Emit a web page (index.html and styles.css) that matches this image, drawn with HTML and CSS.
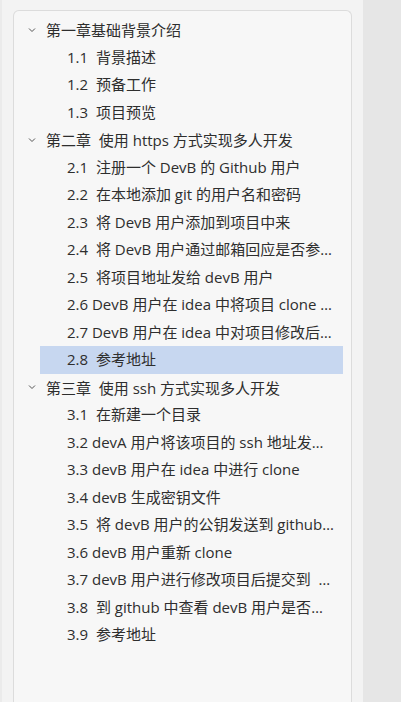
FILE: index.html
```html
<!DOCTYPE html>
<html lang="zh-cn">
<head>
	<meta charset="UTF-8">
	<title>目录</title>
	<link rel="stylesheet" href="styles.css">
</head>
<body>
	<div id="page">
		<div class="edge"></div>
		<div class="side">
			<div class="panel">
				<ul class="toc">
					<li class="chapter">
						<div class="head"><svg class="arrow" width="8" height="6" viewBox="0 0 8 6"><path d="M1 1.5l3 3 3-3"/></svg><span>第一章基础背景介绍</span></div>
						<ul class="items">
							<li>1.1  背景描述</li>
							<li>1.2  预备工作</li>
							<li>1.3  项目预览</li>
						</ul>
					</li>
					<li class="chapter">
						<div class="head"><svg class="arrow" width="8" height="6" viewBox="0 0 8 6"><path d="M1 1.5l3 3 3-3"/></svg><span>第二章  使用 https 方式实现多人开发</span></div>
						<ul class="items">
							<li>2.1  注册一个 DevB 的 Github 用户</li>
							<li>2.2  在本地添加 git 的用户名和密码</li>
							<li>2.3  将 DevB 用户添加到项目中来</li>
							<li>2.4  将 DevB 用户通过邮箱回应是否参与项目</li>
							<li>2.5  将项目地址发给 devB 用户</li>
							<li>2.6 DevB 用户在 idea 中将项目 clone 下来</li>
							<li>2.7 DevB 用户在 idea 中对项目修改后提交</li>
							<li class="on">2.8  参考地址</li>
						</ul>
					</li>
					<li class="chapter">
						<div class="head"><svg class="arrow" width="8" height="6" viewBox="0 0 8 6"><path d="M1 1.5l3 3 3-3"/></svg><span>第三章  使用 ssh 方式实现多人开发</span></div>
						<ul class="items">
							<li>3.1  在新建一个目录</li>
							<li>3.2 devA 用户将该项目的 ssh 地址发给 devB</li>
							<li>3.3 devB 用户在 idea 中进行 clone</li>
							<li>3.4 devB 生成密钥文件</li>
							<li>3.5  将 devB 用户的公钥发送到 github 上</li>
							<li>3.6 devB 用户重新 clone</li>
							<li>3.7 devB 用户进行修改项目后提交到  github</li>
							<li>3.8  到 github 中查看 devB 用户是否提交成功</li>
							<li>3.9  参考地址</li>
						</ul>
					</li>
				</ul>
			</div>
		</div>
		<div class="rest"></div>
	</div>
</body>
</html>
```

FILE: styles.css
```css
* {padding: 0; margin: 0; box-sizing: border-box;}
li {list-style: none;}
html, body {height: 100%;}
body {background: #f3f3f3; font-family: "Open Sans", "Noto Sans CJK SC", sans-serif; font-size: 15px; color: #2e2e2e;}

#page {display: flex; height: 100%;}
.edge {width: 2px; flex-shrink: 0; background: #ebebeb;}
.side {width: 361px; flex-shrink: 0; padding: 10px 11px 0 11px; display: flex;}
.panel {flex: 1; min-width: 0; background: #f7f7f7; border: 1px solid #dcdcdc; border-bottom: none; border-radius: 6px 6px 0 0; padding-top: 5px;}
.rest {flex: 1; background: #e6e6e6;}

.toc .head {height: 27.5px; display: flex; align-items: center; padding-left: 14px; white-space: pre;}
.toc .arrow {fill: none; stroke: #555; stroke-width: 1; margin-right: 10px;}
.toc .items li {height: 27.5px; line-height: 27.5px; margin: 0 8px 0 26px; padding: 0 7px 0 27px; white-space: pre; overflow: hidden; text-overflow: ellipsis;}
.toc .items li.on {background: #c7d7f0;}
```
